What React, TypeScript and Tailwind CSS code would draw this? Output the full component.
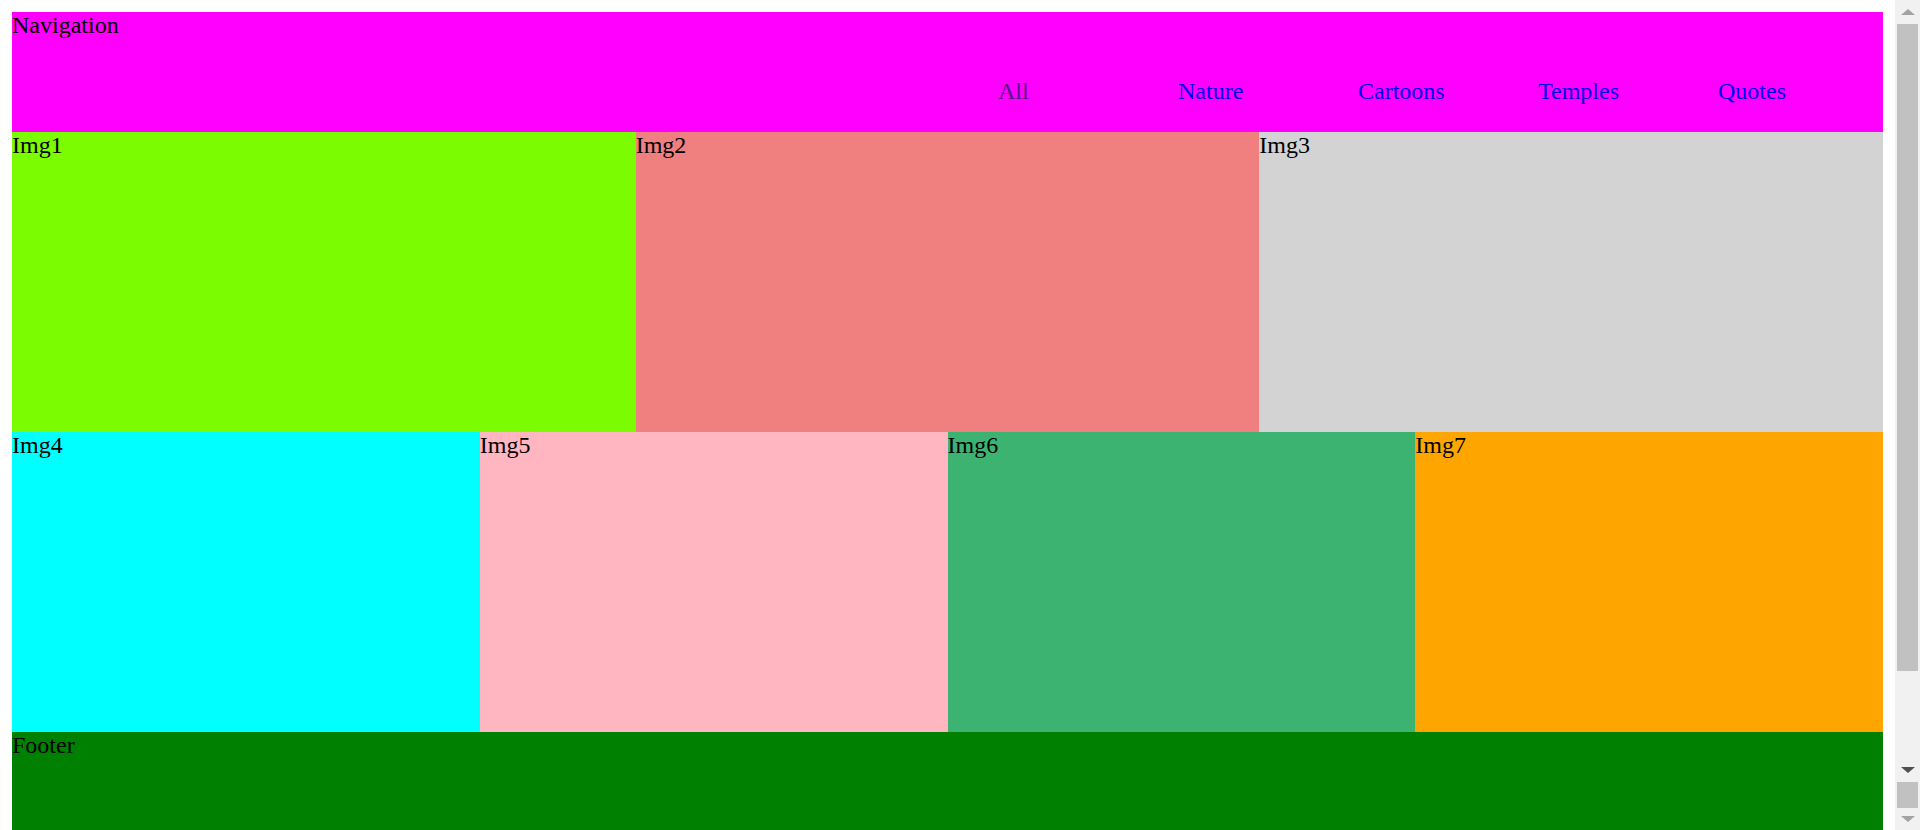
const links = [
  { label: 'All', visited: true },
  { label: 'Nature', visited: false },
  { label: 'Cartoons', visited: false },
  { label: 'Temples', visited: false },
  { label: 'Quotes', visited: false },
];

function Tile({ label, className }: { label: string; className: string }) {
  return <div className={`h-[300px] ${className}`}>{label}</div>;
}

function FakeScrollbar() {
  return (
    <div className="w-[25px] shrink-0 bg-[#f1f1f1] flex flex-col items-center">
      <div className="h-[24px] w-full flex items-center justify-center">
        <div className="w-0 h-0 border-l-[7px] border-r-[7px] border-b-[6px] border-l-transparent border-r-transparent border-b-[#a3a3a3]" />
      </div>
      <div className="h-[647px] w-[21px] bg-[#c1c1c1]" />
      <div className="flex-1" />
      <div className="h-[20px] w-full flex items-center justify-center">
        <div className="w-0 h-0 border-l-[7px] border-r-[7px] border-t-[6px] border-l-transparent border-r-transparent border-t-[#505050]" />
      </div>
      <div className="h-[26px] w-[21px] bg-[#c1c1c1] mt-[2px]" />
      <div className="h-[22px] w-full flex items-center justify-center">
        <div className="w-0 h-0 border-l-[7px] border-r-[7px] border-t-[6px] border-l-transparent border-r-transparent border-t-[#a3a3a3]" />
      </div>
    </div>
  );
}

export default function App() {
  return (
    <div className="h-[830px] w-[1920px] overflow-hidden bg-white flex font-['Liberation_Serif',serif] text-[24px] leading-[normal] text-black">
      <div className="flex-1 px-[12px] pt-[12px]">
        {/* Header */}
        <div className="h-[120px] bg-[#ff00ff]">
          <div>Navigation</div>
          <ul className="flex justify-end mt-[39px]">
            {links.map((l) => (
              <li key={l.label} className="w-[180px] pl-[15px]">
                <a href="#" className={l.visited ? 'text-[#551a8b]' : 'text-[#0000ee]'}>
                  {l.label}
                </a>
              </li>
            ))}
          </ul>
        </div>

        {/* Gallery */}
        <div className="grid grid-cols-3">
          <Tile label="Img1" className="bg-[#7cfc00]" />
          <Tile label="Img2" className="bg-[#f08080]" />
          <Tile label="Img3" className="bg-[#d3d3d3]" />
        </div>
        <div className="grid grid-cols-4">
          <Tile label="Img4" className="bg-[#00ffff]" />
          <Tile label="Img5" className="bg-[#ffb6c1]" />
          <Tile label="Img6" className="bg-[#3cb371]" />
          <Tile label="Img7" className="bg-[#ffa500]" />
        </div>

        {/* Footer */}
        <div className="h-[120px] bg-[#008000]">Footer</div>
      </div>
      <FakeScrollbar />
    </div>
  );
}
